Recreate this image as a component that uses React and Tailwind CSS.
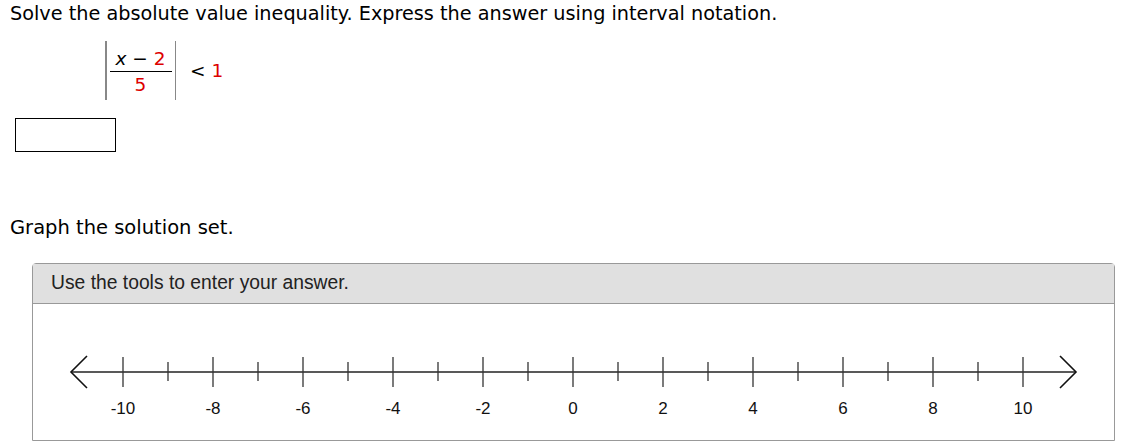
const verdana = { fontFamily: '"DejaVu Sans", Verdana, sans-serif' };

function NumberLine() {
  const x0 = 123;
  const step = 45;
  const ticks = [];
  for (let i = -10; i <= 10; i++) {
    const x = x0 + (i + 10) * step;
    const major = i % 2 === 0;
    ticks.push(
      <line
        key={i}
        x1={x}
        x2={x}
        y1={major ? 357 : 362}
        y2={major ? 387 : 381}
        stroke="#333"
        strokeWidth="1.3"
      />
    );
    if (major) {
      ticks.push(
        <text
          key={"l" + i}
          x={x}
          y={414}
          textAnchor="middle"
          fontSize="17"
          fontFamily='"Liberation Sans", Arial, sans-serif'
          fill="#111"
        >
          {i}
        </text>
      );
    }
  }
  return (
    <svg width="1137" height="442" className="absolute left-0 top-0 pointer-events-none">
      <line x1="71" x2="1076" y1="372" y2="372" stroke="#222" strokeWidth="1.6" />
      <polyline points="87,356 71,372 87,388" fill="none" stroke="#111" strokeWidth="1.6" />
      <polyline points="1060,356 1076,372 1060,388" fill="none" stroke="#111" strokeWidth="1.6" />
      {ticks}
    </svg>
  );
}

export default function App() {
  return (
    <div className="relative w-[1137px] h-[442px] bg-white overflow-hidden text-black">
      <div className="flex flex-col pl-[10px]">
        <p className="text-[19.25px] leading-[22px] mt-[3px]" style={verdana}>
          Solve the absolute value inequality. Express the answer using interval notation.
        </p>
        <div className="flex items-center ml-[95px] mt-[15px] h-[60px]" style={verdana}>
          <div className="w-[1.5px] h-[59px] bg-[#888]" />
          <div className="flex flex-col items-center px-[3px] text-[18.5px] leading-[21px] mt-[3px]">
            <div className="px-[1px]">
              <span className="italic">x</span> − <span className="text-[#d00]">2</span>
            </div>
            <div className="w-[62px] h-px bg-black my-[2px]" />
            <div className="text-[#d00]">5</div>
          </div>
          <div className="w-[1.5px] h-[59px] bg-[#888]" />
          <div className="ml-[14px] text-[18.5px] mt-[2px]">
            &lt; <span className="text-[#d00]">1</span>
          </div>
        </div>
        <div className="ml-[5px] mt-[18px] w-[101px] h-[34px] border border-black" />
        <p className="mt-[65px] text-[19.5px] leading-[22px]" style={verdana}>
          Graph the solution set.
        </p>
      </div>
      <div className="ml-[32px] mt-[24px] w-[1083px] h-[178px] border border-[#999] rounded-t-[4px] flex flex-col">
        <div
          className="h-[40px] bg-[#e0e0e0] border-b border-[#999] flex items-center pl-[18px] text-[19.3px] text-[#222]"
          style={{ fontFamily: '"Liberation Sans", Arial, sans-serif' }}
        >
          Use the tools to enter your answer.
        </div>
        <div className="flex-1" />
      </div>
      <NumberLine />
    </div>
  );
}
